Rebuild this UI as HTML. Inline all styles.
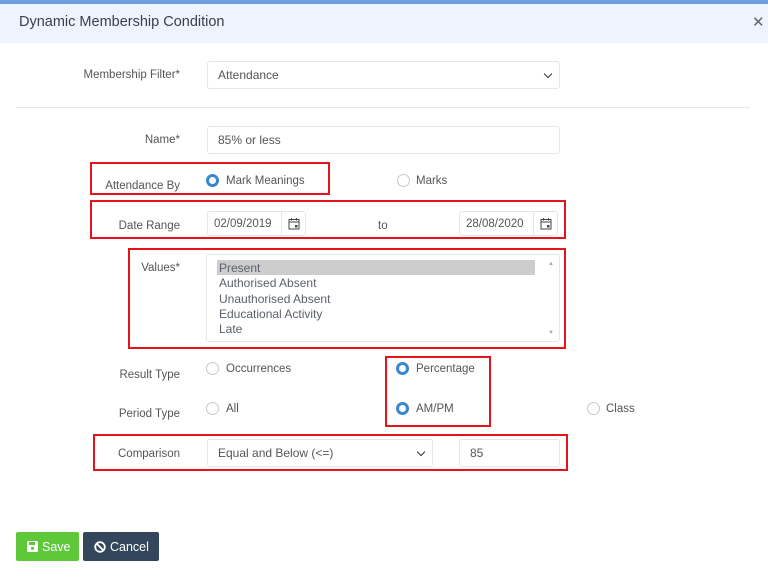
<!DOCTYPE html>
<html><head><style>
*{box-sizing:border-box;margin:0;padding:0}
body{width:768px;height:585px;background:#fff;font-family:"Liberation Sans",sans-serif;font-size:12px;color:#555;position:relative;overflow:hidden}
.a{position:absolute}
.hdr{left:0;top:0;width:768px;height:43px;background:#edf4fd;border-top:4px solid #6c9fdc}
.title{left:19px;top:14px;font-size:14.5px;color:#3a3f4a}
.x{left:752px;top:13px;font-size:15px;color:#666}
.lbl{text-align:right;width:180px;left:0;font-size:11.5px;color:#555}
.box{border:1px solid #e3e6ea;border-radius:3px;background:#fff;font-size:12px;color:#555;padding-left:10px;display:flex;align-items:center}
.red{border:2px solid #e8121b}
.rad{width:13px;height:13px;border-radius:50%;border:1px solid #c8c8c8;background:#fff}
.rad.on{border:3.5px solid #3a86cf}
.rt{font-size:11.5px;color:#555}
.cal{position:absolute;right:0;top:0;width:24px;height:100%;border-left:1px solid #e3e6ea;display:flex;align-items:center;justify-content:center}
.chev{position:absolute;right:8px;top:50%;margin-top:-4px;width:6px;height:6px;border-right:1.6px solid #333;border-bottom:1.6px solid #333;transform:rotate(45deg)}
</style></head><body>
<div class="a hdr"></div>
<div class="a title">Dynamic Membership Condition</div>
<div class="a x">✕</div>

<div class="a lbl" style="top:69px">Membership Filter*</div>
<div class="a box" style="left:207px;top:61px;width:353px;height:28px">Attendance<div class="chev"></div></div>
<div class="a" style="left:16px;top:107px;width:734px;height:1px;background:#e8e8e8"></div>

<div class="a lbl" style="top:134px">Name*</div>
<div class="a box" style="left:207px;top:126px;width:353px;height:28px">85% or less</div>

<div class="a red" style="left:90px;top:162px;width:240px;height:33px"></div>
<div class="a lbl" style="top:180px">Attendance By</div>
<div class="a rad on" style="left:206px;top:174px"></div>
<div class="a rt" style="left:226px;top:175px">Mark Meanings</div>
<div class="a rad" style="left:397px;top:174px"></div>
<div class="a rt" style="left:416px;top:175px">Marks</div>

<div class="a red" style="left:90px;top:200px;width:476px;height:39px"></div>
<div class="a lbl" style="top:220px">Date Range</div>
<div class="a box" style="left:207px;top:211px;width:99px;height:25px;font-size:11.5px;padding-left:6px">02/09/2019<div class="cal"><svg width="12" height="12" viewBox="0 0 12 12"><rect x="1" y="1.5" width="10" height="9.5" fill="none" stroke="#444"/><line x1="1" y1="4" x2="11" y2="4" stroke="#444"/><line x1="3.5" y1="0" x2="3.5" y2="2.5" stroke="#444"/><line x1="8.5" y1="0" x2="8.5" y2="2.5" stroke="#444"/><rect x="7" y="7" width="2.5" height="2.5" fill="#444"/></svg></div></div>
<div class="a rt" style="left:378px;top:220px">to</div>
<div class="a box" style="left:459px;top:211px;width:99px;height:25px;font-size:11.5px;padding-left:6px">28/08/2020<div class="cal"><svg width="12" height="12" viewBox="0 0 12 12"><rect x="1" y="1.5" width="10" height="9.5" fill="none" stroke="#444"/><line x1="1" y1="4" x2="11" y2="4" stroke="#444"/><line x1="3.5" y1="0" x2="3.5" y2="2.5" stroke="#444"/><line x1="8.5" y1="0" x2="8.5" y2="2.5" stroke="#444"/><rect x="7" y="7" width="2.5" height="2.5" fill="#444"/></svg></div></div>

<div class="a red" style="left:128px;top:248px;width:438px;height:101px"></div>
<div class="a lbl" style="top:262px">Values*</div>
<div class="a" style="left:206px;top:254px;width:354px;height:88px;border:1px solid #e3e6ea;border-radius:3px"></div>
<div class="a" style="left:217px;top:260px;width:318px;height:15px;background:#cdcdcd"></div>
<div class="a" style="left:219px;top:261px;font-size:12px;line-height:15.3px;color:#5a5f6a">Present<br>Authorised Absent<br>Unauthorised Absent<br>Educational Activity<br>Late</div>
<div class="a" style="left:548px;top:261px;font-size:6px;color:#aaa">▲</div>
<div class="a" style="left:548px;top:330px;font-size:6px;color:#aaa">▼</div>

<div class="a red" style="left:385px;top:356px;width:106px;height:71px"></div>
<div class="a lbl" style="top:369px">Result Type</div>
<div class="a rad" style="left:206px;top:362px"></div>
<div class="a rt" style="left:226px;top:363px">Occurrences</div>
<div class="a rad on" style="left:396px;top:362px"></div>
<div class="a rt" style="left:416px;top:363px">Percentage</div>

<div class="a lbl" style="top:408px">Period Type</div>
<div class="a rad" style="left:206px;top:402px"></div>
<div class="a rt" style="left:226px;top:403px">All</div>
<div class="a rad on" style="left:396px;top:402px"></div>
<div class="a rt" style="left:416px;top:403px">AM/PM</div>
<div class="a rad" style="left:587px;top:402px"></div>
<div class="a rt" style="left:606px;top:403px">Class</div>

<div class="a red" style="left:93px;top:434px;width:475px;height:37px"></div>
<div class="a lbl" style="top:448px">Comparison</div>
<div class="a box" style="left:207px;top:439px;width:226px;height:28px">Equal and Below (&lt;=)<div class="chev"></div></div>
<div class="a box" style="left:459px;top:439px;width:101px;height:28px">85</div>

<div class="a" style="left:16px;top:532px;width:63px;height:29px;background:#5ec83a;border-radius:2px;color:#fff;font-size:12.5px;display:flex;align-items:center;padding-left:11px"><svg width="11" height="11" viewBox="0 0 11 11" style="margin-right:4px"><rect x="0" y="0" width="11" height="11" rx="1.5" fill="#fff"/><rect x="2" y="1" width="6" height="3" fill="#5ec83a"/><circle cx="5.5" cy="7.3" r="1.6" fill="#5ec83a"/></svg>Save</div>
<div class="a" style="left:83px;top:532px;width:76px;height:29px;background:#34465b;border-radius:2px;color:#fff;font-size:12.5px;display:flex;align-items:center;padding-left:11px"><svg width="12" height="12" viewBox="0 0 12 12" style="margin-right:4px"><circle cx="6" cy="6" r="4.8" fill="none" stroke="#fff" stroke-width="1.8"/><line x1="2.7" y1="2.7" x2="9.3" y2="9.3" stroke="#fff" stroke-width="1.8"/></svg>Cancel</div>
</body></html>
